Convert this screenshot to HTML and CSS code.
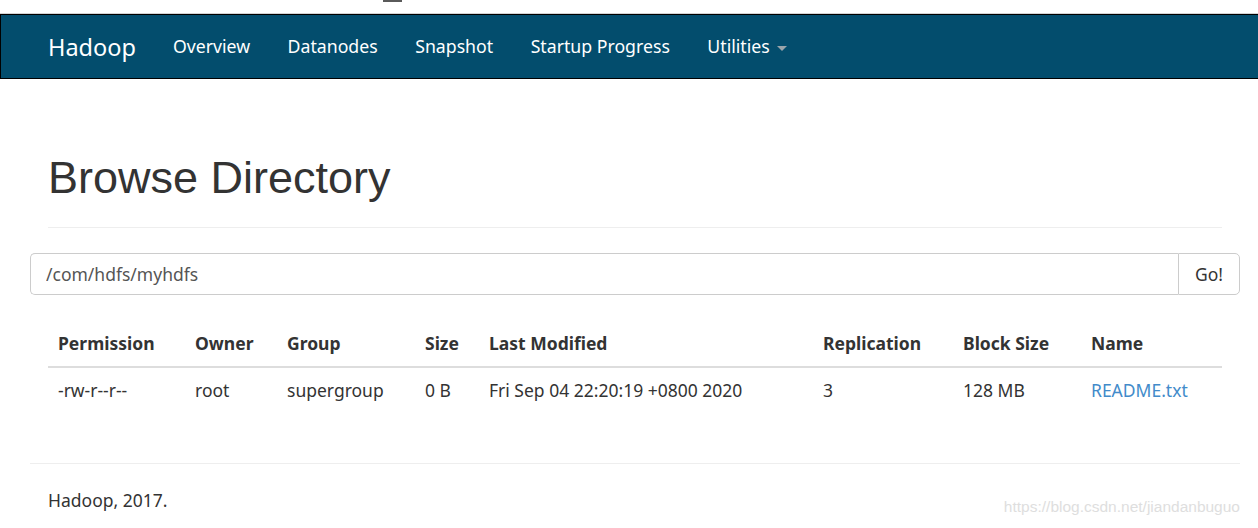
FILE: index.html
```html
<!DOCTYPE html>
<html>
<head>
<meta charset="utf-8">
<title>Browsing HDFS</title>
<link rel="stylesheet" href="styles.css">
</head>
<body>
<div class="topstrip"><span class="mark"></span></div>
<header class="navbar">
  <div class="navbar-inner">
    <a class="brand" href="#">Hadoop</a>
    <ul class="nav">
      <li><a href="#">Overview</a></li>
      <li><a href="#">Datanodes</a></li>
      <li><a href="#">Snapshot</a></li>
      <li><a href="#">Startup Progress</a></li>
      <li><a href="#">Utilities <span class="caret"></span></a></li>
    </ul>
  </div>
</header>

<main class="container">
  <div class="inner">
    <div class="page-header"><h1>Browse Directory</h1></div>
  </div>

  <div class="input-group">
    <input class="form-control" type="text" value="/com/hdfs/myhdfs">
    <button class="btn" type="button">Go!</button>
  </div>

  <div class="inner">
    <table class="table">
      <colgroup>
        <col class="c1"><col class="c2"><col class="c3"><col class="c4">
        <col class="c5"><col class="c6"><col class="c7"><col class="c8">
      </colgroup>
      <thead>
        <tr>
          <th>Permission</th><th>Owner</th><th>Group</th><th>Size</th>
          <th>Last Modified</th><th>Replication</th><th>Block Size</th><th>Name</th>
        </tr>
      </thead>
      <tbody>
        <tr>
          <td>-rw-r--r--</td><td>root</td><td>supergroup</td><td>0 B</td>
          <td>Fri Sep 04 22:20:19 +0800 2020</td><td>3</td><td>128 MB</td>
          <td><a href="#">README.txt</a></td>
        </tr>
      </tbody>
    </table>
  </div>

  <hr class="footer-rule">
  <div class="inner">
    <p class="footer">Hadoop, 2017.</p>
  </div>
</main>
<div class="watermark">https://blog.csdn.net/jiandanbuguo</div>
</body>
</html>
```
FILE: styles.css
```css
html, body {
  margin: 0;
  padding: 0;
  background: #fff;
}
body {
  font-family: "Noto Sans", "Open Sans", sans-serif;
  font-size: 17.5px;
  line-height: 25px;
  color: #333;
  width: 1258px;
  height: 528px;
  overflow: hidden;
  position: relative;
}
a { text-decoration: none; }

.topstrip {
  height: 13px;
}
.mark {
  display: block;
  margin-left: 383px;
  width: 19px;
  height: 2px;
  background: #5a5a5a;
}

.navbar {
  border-top: 1px solid #d4d4d4;
}
.navbar-inner {
  height: 63px;
  background: #034d6d;
  border: 1px solid #000;
  border-right: 0;
  display: flex;
  align-items: center;
  padding-left: 47px;
}
.brand {
  color: #fff;
  font-size: 23.5px;
  line-height: 30px;
  padding-right: 19px;
  margin-top: 1px;
}
.nav {
  list-style: none;
  margin: 0;
  padding: 0;
  display: flex;
}
.nav a {
  display: block;
  color: #fff;
  font-size: 17.7px;
  padding: 0 18.75px;
  margin-top: 0;
}
.nav li:first-child a {
  padding-left: 18px;
}
.caret {
  display: inline-block;
  width: 0;
  height: 0;
  margin-left: 3px;
  vertical-align: middle;
  border-top: 5px solid #9aa5ab;
  border-left: 5px solid transparent;
  border-right: 5px solid transparent;
}

.container {
  margin-left: 30px;
  width: 1210px;
}
.inner {
  padding: 0 18px;
}
.page-header {
  margin: 74px 0 25px;
  padding-bottom: 24px;
  border-bottom: 1px solid #eee;
}
.page-header h1 {
  margin: 0;
  font-family: "Liberation Sans", Arial, sans-serif;
  font-weight: 400;
  font-size: 45px;
  line-height: 50px;
  color: #333;
}

.input-group {
  display: flex;
  height: 42px;
}
.form-control {
  flex: 1;
  box-sizing: border-box;
  height: 42px;
  margin: 0;
  padding: 0 15px;
  font-family: inherit;
  font-size: 17.5px;
  color: #555;
  border: 1px solid #ccc;
  border-right: 0;
  border-radius: 5px 0 0 5px;
  outline: none;
  background: #fff;
}
.btn {
  box-sizing: border-box;
  width: 62px;
  height: 42px;
  margin: 0;
  padding: 0;
  font-family: inherit;
  font-size: 17.5px;
  color: #333;
  background: #fff;
  border: 1px solid #ccc;
  border-radius: 0 5px 5px 0;
}

.table {
  width: 100%;
  table-layout: fixed;
  border-collapse: collapse;
  margin-top: 26px;
}
.c1 { width: 137px; }
.c2 { width: 92px; }
.c3 { width: 138px; }
.c4 { width: 64px; }
.c5 { width: 334px; }
.c6 { width: 140px; }
.c7 { width: 128px; }
.c8 { width: 141px; }
.table th, .table td {
  padding: 10px;
  line-height: 25px;
  text-align: left;
  white-space: nowrap;
  vertical-align: bottom;
}
.table th {
  font-weight: 700;
  border-bottom: 2px solid #ddd;
}
.table td a { color: #428bca; }

.footer-rule {
  margin: 50px 0 0;
  border: 0;
  border-top: 1px solid #eee;
}
.footer {
  margin: 24px 0 0;
}

.watermark {
  position: absolute;
  right: 18px;
  bottom: 9px;
  font-family: "Liberation Sans", Arial, sans-serif;
  font-size: 15.5px;
  color: #dedede;
}
```
